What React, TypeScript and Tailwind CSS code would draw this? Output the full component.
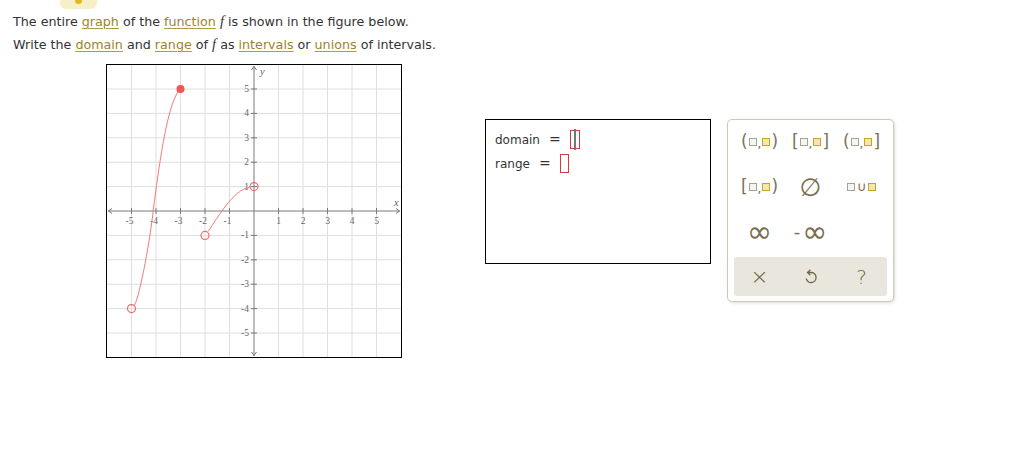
import React from "react";

const px = (x: number) => 147 + 24.5 * x;
const py = (y: number) => 146 - 24.4 * y;

const ticks = [-5, -4, -3, -2, -1, 1, 2, 3, 4, 5];

const Graph = () => {
  return (
    <div className="w-[296px] h-[294px] border border-black bg-white">
      <svg width="294" height="292" viewBox="0 0 294 292">
        {/* grid */}
        {ticks.map((t) => (
          <line key={"gx" + t} x1={px(t)} y1={0} x2={px(t)} y2={292} stroke="#dedede" strokeWidth="1" />
        ))}
        {ticks.map((t) => (
          <line key={"gy" + t} x1={0} y1={py(t)} x2={294} y2={py(t)} stroke="#dedede" strokeWidth="1" />
        ))}
        {/* axes */}
        <line x1={1} y1={146} x2={293} y2={146} stroke="#7a7a7a" strokeWidth="1" />
        <line x1={147} y1={1} x2={147} y2={291} stroke="#7a7a7a" strokeWidth="1" />
        <path d="M5 143.5 L1.5 146 L5 148.5" fill="none" stroke="#7a7a7a" strokeWidth="1" />
        <path d="M289 143.5 L292.5 146 L289 148.5" fill="none" stroke="#7a7a7a" strokeWidth="1" />
        <path d="M144.5 5 L147 1.5 L149.5 5" fill="none" stroke="#7a7a7a" strokeWidth="1" />
        <path d="M144.5 287 L147 290.5 L149.5 287" fill="none" stroke="#7a7a7a" strokeWidth="1" />
        {ticks.map((t) => (
          <line key={"tx" + t} x1={px(t)} y1={143} x2={px(t)} y2={149} stroke="#7a7a7a" strokeWidth="1" />
        ))}
        {ticks.map((t) => (
          <line key={"ty" + t} x1={144} y1={py(t)} x2={150} y2={py(t)} stroke="#7a7a7a" strokeWidth="1" />
        ))}
        {/* labels */}
        <g fontFamily="'Liberation Serif', serif" fontSize="9.5" fill="#666">
          {ticks.map((t) => (
            <text key={"lx" + t} x={px(t) - (t < 0 ? 2 : 0)} y={159} textAnchor="middle">
              {t}
            </text>
          ))}
          {ticks.map((t) => (
            <text key={"ly" + t} x={142} y={py(t) + 3} textAnchor="end">
              {t}
            </text>
          ))}
          <text x={287} y={141} fontStyle="italic" fontSize="10.5">x</text>
          <text x={153} y={10} fontStyle="italic" fontSize="10.5">y</text>
        </g>
        {/* function */}
        <path
          d="M27.5 240 C31 236, 42 185, 46.5 143 C51 110, 60 35, 73.5 24"
          fill="none"
          stroke="#ef7b7b"
          strokeWidth="1"
        />
        <path d="M101 166.5 C112 151, 126 125, 142.7 122.3" fill="none" stroke="#ef7b7b" strokeWidth="1" />
        <circle cx={px(-3)} cy={py(5)} r="4" fill="#f25555" />
        <circle cx={px(-5)} cy={py(-4)} r="4" fill="none" stroke="#ef6b6b" strokeWidth="1.2" />
        <circle cx={px(-2)} cy={py(-1)} r="4" fill="none" stroke="#ef6b6b" strokeWidth="1.2" />
        <circle cx={px(0)} cy={py(1)} r="4" fill="none" stroke="#ef6b6b" strokeWidth="1.2" />
      </svg>
    </div>
  );
};

const Gray = () => <span className="inline-block w-[8px] h-[8px] border border-[#a3a298] bg-[#f6f6f1]" />;
const Gold = () => <span className="inline-block w-[8px] h-[8px] border border-[#c4a52a] bg-[#f5e7a6]" />;

const Interval = ({ open, close }: { open: string; close: string }) => (
  <span className="flex items-center text-[17px] leading-none text-[#7d7256] font-['DejaVu_Sans',sans-serif]">
    <span className="mb-[2px]">{open}</span>
    <span className="ml-[1px]" />
    <Gray />
    <span className="text-[12px] mx-[1px] mt-[4px] text-[#6e6447]">,</span>
    <Gold />
    <span className="ml-[1px]" />
    <span className="mb-[2px]">{close}</span>
  </span>
);

const Link = ({ children }: { children: React.ReactNode }) => (
  <span className="text-[#9c8428] underline underline-offset-2 decoration-[#b09a45]">{children}</span>
);

const F = () => <span className="font-['Liberation_Serif',serif] italic text-[14.5px]">f</span>;

const UndoIcon = () => (
  <svg width="14" height="16" viewBox="0 0 14 16" fill="none" stroke="#6e6447" strokeWidth="1.3" strokeLinecap="round">
    <path d="M6 1.2 L3.6 3.5 L6 5.8" />
    <path d="M3.8 3.5 H7 A5 5 0 1 1 2.3 10" />
  </svg>
);

const Palette = () => (
  <div className="w-[167px] h-[183px] border border-[#cfc9b6] rounded-[5px] bg-white shadow-[1px_1px_3px_rgba(0,0,0,0.15)] px-[6px] pt-[7px] pb-[5px] flex flex-col">
    <div className="grid grid-cols-3 h-[30px] items-center justify-items-center">
      <Interval open="(" close=")" />
      <Interval open="[" close="]" />
      <Interval open="(" close="]" />
    </div>
    <div className="grid grid-cols-3 h-[30px] mt-[15px] items-center justify-items-center">
      <Interval open="[" close=")" />
      <span className="text-[25px] leading-none text-[#786d50] font-['DejaVu_Sans',sans-serif]">∅</span>
      <span className="flex items-center gap-[2px] text-[13px] leading-none text-[#786d50]">
        <Gray />
        <span className="font-['DejaVu_Sans',sans-serif] mb-[1px]">∪</span>
        <Gold />
      </span>
    </div>
    <div className="grid grid-cols-3 h-[30px] mt-[15px] items-center justify-items-center">
      <span className="text-[30px] leading-none text-[#786d50] font-['DejaVu_Sans',sans-serif] mb-[2px]">∞</span>
      <span className="flex items-center text-[30px] leading-none text-[#786d50] font-['DejaVu_Sans',sans-serif]">
        <span className="text-[18px] mr-[2px] mb-[2px]">-</span>
        <span className="mb-[2px]">∞</span>
      </span>
      <span />
    </div>
    <div className="grid grid-cols-3 h-[39px] mt-[10px] items-center justify-items-center bg-[#e9e6de] rounded-[3px]">
      <span className="text-[22px] leading-none text-[#6e6447] font-['DejaVu_Sans',sans-serif] font-light">×</span>
      <UndoIcon />
      <span className="text-[20px] leading-none text-[#6e6447] font-['DejaVu_Sans',sans-serif] font-light">?</span>
    </div>
  </div>
);

const AnswerBox = () => (
  <div className="w-[226px] h-[145px] border border-black bg-white pl-[9px] pt-[9px] text-[12px] text-[#333] font-['DejaVu_Sans',sans-serif]">
    <div className="flex items-center h-[21px]">
      <span>domain</span>
      <span className="ml-[9px] text-[14px]">=</span>
      <span className="relative ml-[9px] w-[10px] h-[19px] border border-[#d33b3b]">
        <span className="absolute left-[3px] top-[-2px] w-[2px] h-[21px] border-x border-[#777]" />
      </span>
    </div>
    <div className="flex items-center h-[21px] mt-[3px]">
      <span>range</span>
      <span className="ml-[9px] text-[14px]">=</span>
      <span className="ml-[9px] w-[9px] h-[19px] border border-[#d33b3b]" />
    </div>
  </div>
);

export default function App() {
  return (
    <div className="w-[1024px] h-[449px] bg-white overflow-hidden font-['DejaVu_Sans',sans-serif] text-[#333]">
      <div className="ml-[60px] w-[37px] h-[9px] rounded-b-[6px] bg-[#f7efc8] flex justify-center">
        <span className="w-[7px] h-[4px] rounded-b-full bg-[#e0b820]" />
      </div>
      <div className="ml-[13px] mt-[1px] text-[12.7px] leading-[22px]">
        <div>
          The entire <Link>graph</Link> of the <Link>function</Link> <F /> is shown in the figure below.
        </div>
        <div>
          Write the <Link>domain</Link> and <Link>range</Link> of <F /> as <Link>intervals</Link> or <Link>unions</Link> of intervals.
        </div>
      </div>
      <div className="flex items-start mt-[8px] ml-[106px]">
        <Graph />
        <div className="ml-[83px] mt-[55px]">
          <AnswerBox />
        </div>
        <div className="ml-[16px] mt-[55px]">
          <Palette />
        </div>
      </div>
    </div>
  );
}
